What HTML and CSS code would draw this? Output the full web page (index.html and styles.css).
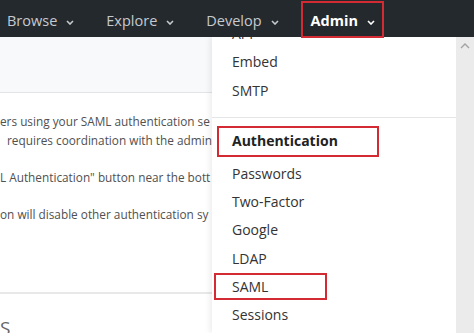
FILE: index.html
```html
<!DOCTYPE html>
<html lang="en">
<head>
    <meta charset="UTF-8">
    <meta name="viewport" content="width=device-width, initial-scale=1.0">
    <title>Admin - Authentication</title>
    <link rel="stylesheet" href="styles.css">
</head>
<body>
    <nav class="topnav">
        <a class="nav-item">Browse
            <svg class="caret" viewBox="0 0 8 5"><path d="M1 1l3 3 3-3"/></svg>
        </a>
        <a class="nav-item">Explore
            <svg class="caret" viewBox="0 0 8 5"><path d="M1 1l3 3 3-3"/></svg>
        </a>
        <a class="nav-item">Develop
            <svg class="caret" viewBox="0 0 8 5"><path d="M1 1l3 3 3-3"/></svg>
        </a>
        <a class="nav-item active">Admin
            <svg class="caret" viewBox="0 0 8 5"><path d="M1 1l3 3 3-3"/></svg>
        </a>
    </nav>

    <div class="page-header"></div>

    <main class="content">
        <p>ers using your SAML authentication se</p>
        <p class="line-indent">requires coordination with the admin</p>
        <p>L Authentication" button near the bott</p>
        <p>on will disable other authentication sy</p>
    </main>

    <section class="settings">
        <h2>S</h2>
    </section>

    <!-- admin dropdown, scrolled down a bit -->
    <div class="dropdown">
        <ul class="menu">
            <li>API</li>
            <li>Embed</li>
            <li>SMTP</li>
            <li class="divider"></li>
            <li class="menu-head marked">Authentication</li>
            <li>Passwords</li>
            <li>Two-Factor</li>
            <li>Google</li>
            <li>LDAP</li>
            <li class="marked-saml">SAML</li>
            <li>Sessions</li>
        </ul>
        <div class="scrollbar">
            <svg class="scroll-up" viewBox="0 0 10 6"><path d="M1 5l4-4 4 4"/></svg>
        </div>
    </div>
</body>
</html>
```

FILE: styles.css
```css
body {
    margin: 0;
    width: 474px;
    height: 333px;
    overflow: hidden;
    position: relative;
    background-color: #ffffff;
    font-family: "Open Sans", "Liberation Sans", sans-serif;
    color: #505050;
}

.topnav {
    height: 37px;
    background-color: #24292e;
    display: flex;
    align-items: center;
    padding-left: 7px;
    gap: 32px;
    position: relative;
    z-index: 2;
}

.nav-item {
    display: flex;
    align-items: center;
    gap: 9px;
    font-size: 14.5px;
    color: #c6cacf;
    line-height: 20px;
    margin-top: 5px;
}

.nav-item.active {
    color: #ffffff;
    font-weight: 700;
    position: relative;
}

.nav-item.active::after {
    content: "";
    position: absolute;
    left: -10px;
    right: -9px;
    top: -10px;
    bottom: -7px;
    border: 2px solid #d42a34;
}

.caret {
    width: 8px;
    height: 5px;
    fill: none;
    stroke: currentColor;
    stroke-width: 1.6;
    margin-top: 2px;
}

.page-header {
    height: 55px;
    background-color: #f8f9fa;
    border-bottom: 1px solid #e3e4e6;
}

.content {
    padding-top: 19px;
    height: 180px;
    font-size: 11.8px;
    line-height: 19px;
}

.content p {
    margin: 0 0 18px;
    white-space: nowrap;
}

.content p:first-child {
    margin-bottom: 0;
}

.content .line-indent {
    padding-left: 7px;
}

.settings {
    border-top: 2px solid #e8e8e8;
}

.settings h2 {
    margin: 0;
    padding-top: 24px;
    font-size: 19px;
    font-weight: 400;
    color: #666;
    line-height: 20px;
}

.dropdown {
    position: absolute;
    top: 37px;
    left: 212px;
    right: 0;
    bottom: 0;
    display: flex;
    background-color: #ffffff;
    box-shadow: -2px 0 6px rgba(0, 0, 0, 0.08);
    overflow: hidden;
    z-index: 1;
}

.menu {
    list-style: none;
    margin: -17px 0 0;
    padding: 0;
    flex: 1;
    font-size: 14px;
    color: #333;
}

.menu li {
    padding-left: 20px;
    line-height: 28.3px;
    position: relative;
}

.menu .divider {
    height: 1px;
    padding: 0;
    margin: 12px 0 6px;
    background-color: #e4e5e7;
}

.menu .menu-head {
    font-weight: 700;
    color: #222;
    line-height: 34px;
    margin-bottom: 2px;
}

.marked::after {
    content: "";
    position: absolute;
    left: 5px;
    width: 158px;
    top: 2px;
    height: 27px;
    border: 2px solid #d42a34;
}

.marked-saml::after {
    content: "";
    position: absolute;
    left: 2px;
    width: 109px;
    top: 0;
    height: 23px;
    border: 2px solid #d42a34;
}

.scrollbar {
    width: 18px;
    background-color: #ebebeb;
    display: flex;
    justify-content: center;
    padding-top: 6px;
}

.scroll-up {
    width: 10px;
    height: 6px;
    fill: none;
    stroke: #a3a3a3;
    stroke-width: 1.4;
}
```
